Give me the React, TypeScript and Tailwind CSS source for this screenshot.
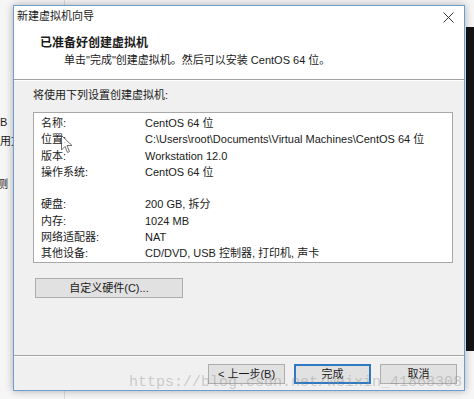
const rows: [string, string][] = [
  ["名称:", "CentOS 64 位"],
  ["位置:", "C:\\Users\\root\\Documents\\Virtual Machines\\CentOS 64 位"],
  ["版本:", "Workstation 12.0"],
  ["操作系统:", "CentOS 64 位"],
  ["", ""],
  ["硬盘:", "200 GB, 拆分"],
  ["内存:", "1024 MB"],
  ["网络适配器:", "NAT"],
  ["其他设备:", "CD/DVD, USB 控制器, 打印机, 声卡"],
];

const font = "font-['Liberation_Sans','Noto_Sans_CJK_SC',sans-serif]";

export default function App() {
  return (
    <div
      className={`relative w-[474px] h-[399px] overflow-hidden bg-[#f6f6f6] text-[#1a1a1a] ${font}`}
    >
      {/* desktop behind the dialog */}
      <div className="absolute left-[64px] top-0 h-full w-px bg-[#dcdcdc]" />
      <div className="absolute left-[466px] top-[27px] w-[8px] h-[324px] bg-[#141414]" />
      <div className="absolute left-0 top-[115px] text-[11px] leading-[14px]">B</div>
      <div className="absolute left-0 top-[134px] text-[11px] leading-[14px] whitespace-nowrap">用文</div>
      <div className="absolute left-[-3px] top-[177px] text-[11px] leading-[14px]">测</div>

      {/* dialog window */}
      <div className="absolute left-[13px] top-[5px] w-[452px] h-[386px] flex flex-col border border-[#6b9fd3] bg-[#f0f0f0] shadow-[0_0_8px_rgba(0,0,0,0.3)]">
        <div className="bg-white">
          <div className="h-[20px] flex items-center justify-between pl-[3px] pr-[10px]">
            <span className="text-[11px]">新建虚拟机向导</span>
            <svg width="11" height="11" viewBox="0 0 11 11" className="mt-[2px]">
              <path d="M0.5 0.5 L10.5 10.5 M10.5 0.5 L0.5 10.5" stroke="#333" strokeWidth="1" />
            </svg>
          </div>
          <div className="pt-[8.5px] pb-[10.5px]">
            <div className="pl-[26px] text-[12px] leading-[17px] font-bold">已准备好创建虚拟机</div>
            <div className="pl-[50px] text-[11px] leading-[17px]">
              单击"完成"创建虚拟机。然后可以安装 CentOS 64 位。
            </div>
          </div>
        </div>
        <div className="border-t border-[#a0a0a0] border-b border-b-white" />

        <div className="flex-1 flex flex-col pl-[19px] pt-[6px]">
          <div className="text-[11px] leading-[16px]">将使用下列设置创建虚拟机:</div>
          <div className="mt-[9px] w-[420px] h-[151px] bg-white border border-[#a8a8a8] pt-[2px] pl-[7px]">
            {rows.map(([k, v], i) => (
              <div key={i} className="flex h-[16.25px] text-[11px] leading-[16.25px] whitespace-nowrap">
                <span className="w-[104px]">{k}</span>
                <span>{v}</span>
              </div>
            ))}
          </div>
          <button className="mt-[15px] ml-[2px] w-[148px] h-[20px] bg-[#e1e1e1] border border-[#adadad] text-[11px] leading-[18px]">
            自定义硬件(C)...
          </button>
        </div>

        <div className="border-t border-[#a0a0a0] border-b border-b-white" />
        <div className="h-[33px] flex justify-end items-start gap-[9px] pt-[7px] pr-[7px]">
          <button className="w-[77px] h-[20px] bg-[#e1e1e1] border border-[#adadad] text-[11px] leading-[18px]">
            &lt; 上一步(B)
          </button>
          <button className="w-[77px] h-[20px] bg-[#e1e1e1] border-2 border-[#2f78c2] text-[11px] leading-[16px]">
            完成
          </button>
          <button className="w-[77px] h-[20px] bg-[#e1e1e1] border border-[#adadad] text-[11px] leading-[18px]">
            取消
          </button>
        </div>
      </div>

      {/* mouse pointer */}
      <svg className="absolute left-[61px] top-[135px] opacity-70" width="12" height="19" viewBox="0 0 12 19">
        <path d="M0.5 0.5 L0.5 15 L4 11.5 L6.5 17.5 L8.5 16.5 L6 10.5 L11 10.5 Z" fill="white" stroke="#333" strokeWidth="1" />
      </svg>

      {/* watermark */}
      <div className="absolute left-[129px] top-[374px] text-[15px] leading-[18px] whitespace-nowrap font-['Liberation_Mono',monospace] text-[#8c8c8c]/40">
        https://blog.csdn.net/weixin_41868308
      </div>
    </div>
  );
}
